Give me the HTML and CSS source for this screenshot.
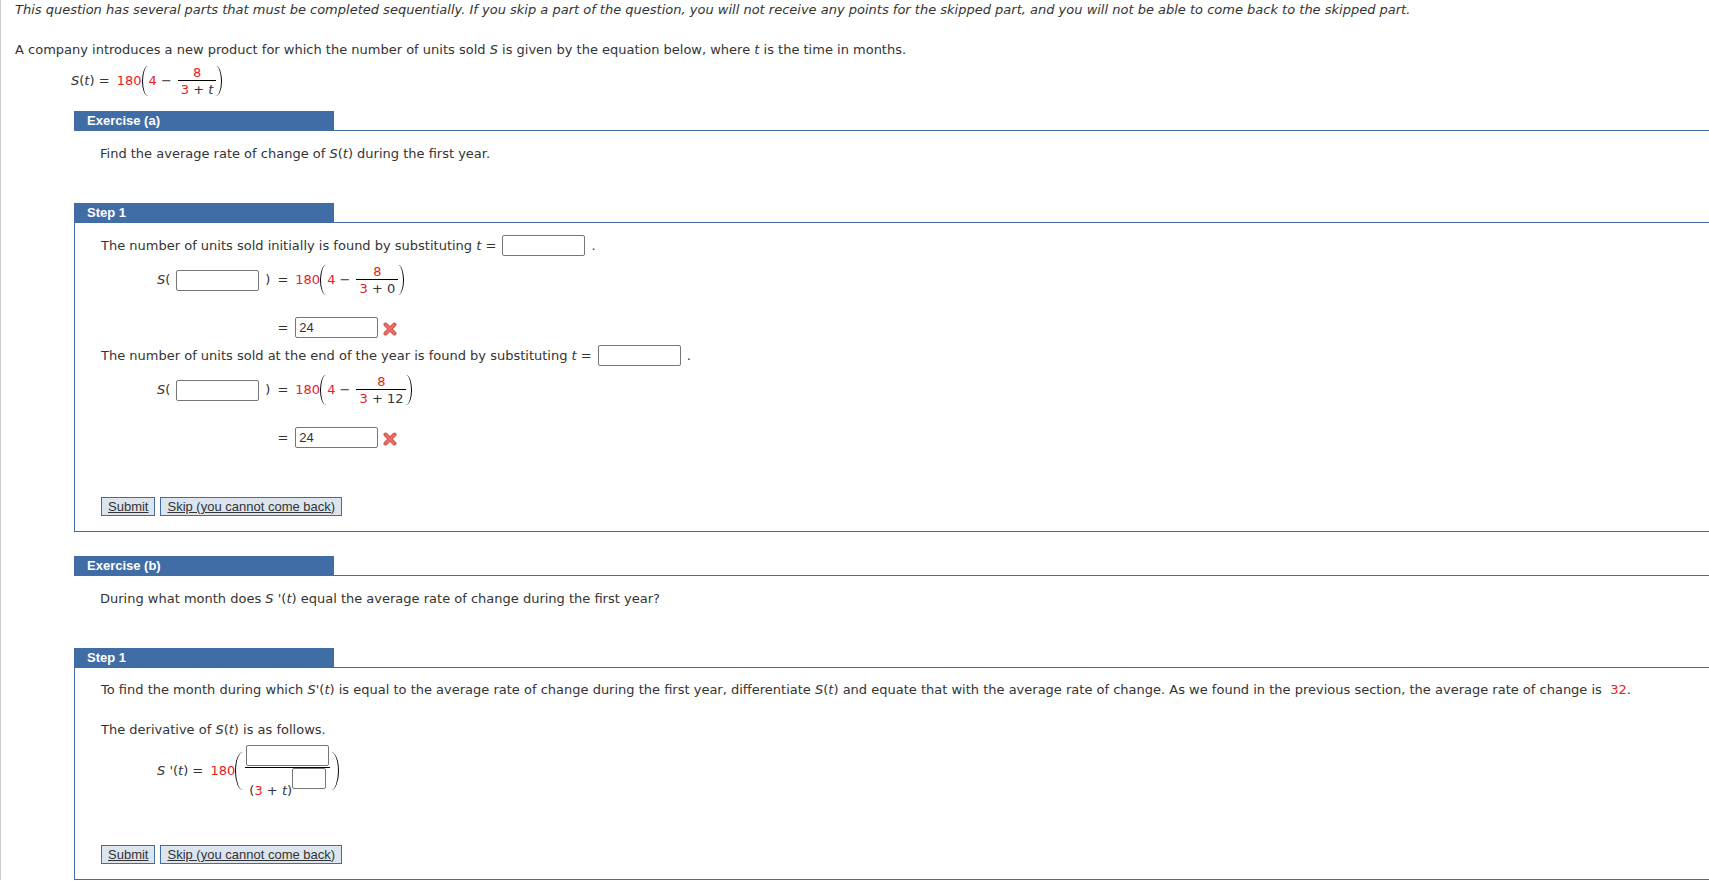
FILE: index.html
```html
<!DOCTYPE html>
<html lang="en">
<head>
  <meta charset="UTF-8">
  <meta name="viewport" content="width=device-width, initial-scale=1.0">
  <title>Average Rate of Change</title>
  <link rel="stylesheet" href="styles.css">
</head>
<body>
  <div class="question">
    <p class="notice"><i>This question has several parts that must be completed sequentially. If you skip a part of the question, you will not receive any points for the skipped part, and you will not be able to come back to the skipped part.</i></p>
    <p>A company introduces a new product for which the number of units sold <i>S</i> is given by the equation below, where <i>t</i> is the time in months.</p>

    <div class="equation">
      <span><i>S</i>(<i>t</i>) =&nbsp;</span><span class="red">180</span><span class="paren left"></span><span><span class="red">4</span> −</span>
      <span class="fraction"><span class="num red">8</span><span class="den"><span class="red">3</span> + <i>t</i></span></span><span class="paren right"></span>
    </div>

    <section class="part">
      <div class="header"><h2>Exercise (a)</h2></div>
      <p class="prompt">Find the average rate of change of <i>S</i>(<i>t</i>) during the first year.</p>
    </section>

    <form class="part">
      <div class="header"><h2>Step 1</h2></div>
      <div class="step">
        <div class="line"><label for="t0">The number of units sold initially is found by substituting <i>t</i> =</label> <input type="text" id="t0"> .</div>
        <div class="work">
          <span class="lhs"><label for="s0"><i>S</i>(</label><input type="text" id="s0">)</span>
          <span>=</span>
          <span class="expr">
            <span class="red">180</span><span class="paren left"></span><span><span class="red">4</span> −</span>
            <span class="fraction"><span class="num red">8</span><span class="den"><span class="red">3</span> + 0</span></span><span class="paren right"></span>
          </span>
          <label class="equals" for="r0">=</label>
          <span class="expr">
            <input type="text" id="r0" value="24">
            <svg class="wrong" role="img" aria-label="Incorrect" width="14" height="14" viewBox="0 0 14 14">
              <path d="M2.5 2.5l9 9M11.5 2.5l-9 9" stroke="#d9534f" stroke-width="4" stroke-linecap="round"/>
              <path d="M2.5 2.5l9 9M11.5 2.5l-9 9" stroke="#ee6d68" stroke-width="2" stroke-linecap="round"/>
            </svg>
          </span>
        </div>
        <div class="line"><label for="t12">The number of units sold at the end of the year is found by substituting <i>t</i> =</label> <input type="text" id="t12"> .</div>
        <div class="work">
          <span class="lhs"><label for="s12"><i>S</i>(</label><input type="text" id="s12">)</span>
          <span>=</span>
          <span class="expr">
            <span class="red">180</span><span class="paren left"></span><span><span class="red">4</span> −</span>
            <span class="fraction"><span class="num red">8</span><span class="den"><span class="red">3</span> + 12</span></span><span class="paren right"></span>
          </span>
          <label class="equals" for="r12">=</label>
          <span class="expr">
            <input type="text" id="r12" value="24">
            <svg class="wrong" role="img" aria-label="Incorrect" width="14" height="14" viewBox="0 0 14 14">
              <path d="M2.5 2.5l9 9M11.5 2.5l-9 9" stroke="#d9534f" stroke-width="4" stroke-linecap="round"/>
              <path d="M2.5 2.5l9 9M11.5 2.5l-9 9" stroke="#ee6d68" stroke-width="2" stroke-linecap="round"/>
            </svg>
          </span>
        </div>
        <div class="buttons">
          <button type="button">Submit</button>
          <button type="button">Skip (you cannot come back)</button>
        </div>
      </div>
    </form>

    <section class="part">
      <div class="header"><h2>Exercise (b)</h2></div>
      <p class="prompt">During what month does <i>S '</i>(<i>t</i>) equal the average rate of change during the first year?</p>
    </section>

    <form class="part">
      <div class="header"><h2>Step 1</h2></div>
      <div class="step">
        <p>To find the month during which <i>S</i>'(<i>t</i>) is equal to the average rate of change during the first year, differentiate <i>S</i>(<i>t</i>) and equate that with the average rate of change. As we found in the previous section, the average rate of change is &nbsp;<span class="red">32</span>.</p>
        <p class="follow">The derivative of <i>S</i>(<i>t</i>) is as follows.</p>
        <div class="equation derivative">
          <span><i>S '</i>(<i>t</i>) =&nbsp;</span><span class="red">180</span><span class="paren left tall"></span>
          <span class="fraction big">
            <input type="text" id="num" aria-label="Numerator">
            <span class="den power"><span class="base">(<span class="red">3</span> + <i>t</i>)</span><input type="text" class="small" id="exponent" aria-label="Exponent"></span>
          </span><span class="paren right tall"></span>
        </div>
        <div class="buttons">
          <button type="button">Submit</button>
          <button type="button">Skip (you cannot come back)</button>
        </div>
      </div>
    </form>
  </div>
</body>
</html>
```

FILE: styles.css
```css
* {
  box-sizing: border-box;
}
body {
  margin: 0;
  background: #fff;
  color: #333;
  font-family: Verdana, "DejaVu Sans", sans-serif;
  font-size: 13px;
  line-height: 20px;
}
.question {
  border-left: 1px solid #ccc;
  padding-left: 14px;
}
p {
  margin: 0;
}
.notice {
  margin-bottom: 20px;
}
.red {
  color: #e8201c;
}

/* equations */
.equation {
  display: flex;
  align-items: center;
  margin: 5px 0 14px 56px;
}
.equation > .red {
  margin-left: 3px;
}
.expr {
  display: flex;
  align-items: center;
}
.paren {
  width: 6px;
  height: 30px;
}
.paren.left {
  margin-right: 1px;
  border-left: 1px solid #000;
  border-radius: 100% 0 0 100% / 50%;
}
.paren.right {
  border-right: 1px solid #000;
  border-radius: 0 100% 100% 0 / 50%;
}
.paren.tall {
  width: 8px;
  height: 38px;
}
.fraction {
  display: flex;
  flex-direction: column;
  align-items: center;
  margin-left: 6px;
  line-height: 15px;
}
.den {
  border-top: 1px solid #000;
  padding: 1px 3px 0;
}
.work {
  display: grid;
  grid-template-columns: auto auto 1fr;
  column-gap: 7px;
  row-gap: 21px;
  align-items: center;
  margin: 8px 0 7px 56px;
}
.lhs {
  display: flex;
  align-items: center;
}
.lhs input {
  margin: 0 6px;
}
.equals {
  grid-column: 2;
}
.wrong {
  margin: 2px 0 0 5px;
  fill: none;
}

/* section headers */
.header {
  border-bottom: 1px solid #416da6;
}
.part {
  margin-left: 59px;
}
h2 {
  width: 260px;
  margin: 0;
  padding-left: 13px;
  background: #416da6;
  color: #fff;
  font: bold 13px/19px Arial, "Liberation Sans", sans-serif;
}
.prompt {
  padding: 13px 26px 39px;
}
.step {
  margin-bottom: 24px;
  padding: 12px 0 15px 26px;
  border: 1px solid #416da6;
  border-width: 0 0 1px 1px;
}
.line {
  display: flex;
  align-items: center;
  gap: 6px;
}
.follow {
  margin-top: 20px;
}

/* controls */
input {
  width: 83px;
  height: 21px;
  padding: 1px 3px;
  border: 1px solid #767676;
  border-radius: 2px;
  background: #fff;
  color: #333;
  font: 13px Arial, "Liberation Sans", sans-serif;
}
.small {
  width: 34px;
}
.derivative {
  margin: 3px 0 47px 56px;
}
.big {
  margin-left: 0;
  padding-top: 2px;
}
.big > input {
  margin: 0 2px 1px;
}
.power {
  display: flex;
  align-items: flex-start;
  padding: 0 4px;
}
.base {
  padding-top: 15px;
}
.buttons {
  display: flex;
  gap: 5px;
}
.work + .buttons {
  margin-top: 49px;
}
button {
  height: 19px;
  padding: 0 6px;
  border: 1px solid #416da6;
  background: #dce4ee;
  color: #333;
  font: 13px/16px Arial, "Liberation Sans", sans-serif;
  text-decoration: underline;
}
```
